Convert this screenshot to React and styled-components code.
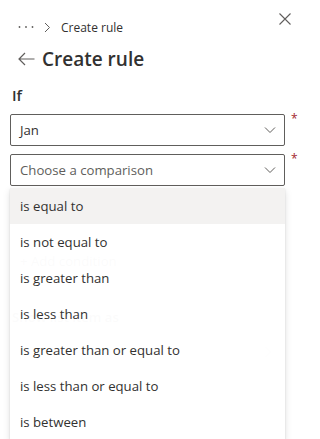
import React from "react";
import styled, { createGlobalStyle } from "styled-components";

const Global = createGlobalStyle`
  html, body { margin: 0; padding: 0; background: #fff; }
  body { font-family: "Open Sans", "Noto Sans", "Liberation Sans", sans-serif; color: #323130; }
  * { box-sizing: border-box; }
`;

const Panel = styled.div`
  position: relative;
  width: 305px;
  height: 439px;
  overflow: hidden;
  padding: 0 0 0 10px;
`;

const TopBar = styled.div`
  display: flex;
  align-items: center;
  height: 28px;
  margin-top: 13px;
  padding: 0 14px 0 8px;
`;

const Crumbs = styled.div`
  display: flex;
  align-items: center;
  gap: 10px;
  flex: 1;
  font-size: 12px;
  color: #323130;
`;

const CloseBtn = styled.button`
  border: 0;
  background: none;
  padding: 0;
  width: 12px;
  height: 12px;
  display: flex;
  align-self: flex-start;
`;

const TitleRow = styled.div`
  display: flex;
  align-items: center;
  gap: 7px;
  padding-left: 8px;
  margin-top: 3px;
  height: 30px;
`;

const Title = styled.h1`
  margin: 0;
  font-size: 19px;
  font-weight: 600;
  color: #323130;
`;

const Label = styled.div`
  font-size: 15px;
  font-weight: 600;
  margin: 10px 0 0 2px;
  height: 22px;
  line-height: 22px;
  color: #323130;
`;

const FieldRow = styled.div`
  display: flex;
  align-items: flex-start;
  margin-top: ${(p) => p.$top}px;
`;

const Select = styled.div`
  flex: 0 0 275px;
  height: 32px;
  border: 1px solid #605e5c;
  border-radius: 2px;
  display: flex;
  align-items: center;
  padding: 0 8px 0 9px;
  font-size: 13.2px;
  color: ${(p) => (p.$placeholder ? "#605e5c" : "#323130")};
  background: #fff;
`;

const SelectText = styled.span`
  flex: 1;
`;

const Req = styled.span`
  color: #a4262c;
  font-size: 12px;
  line-height: 10px;
  margin: 0 0 0 6px;
`;

const Faint = styled.div`
  margin-top: ${(p) => p.$top}px;
  font-size: 13.2px;
  font-weight: ${(p) => p.$weight || 400};
  padding-left: ${(p) => p.$left || 2}px;
  color: #323130;
`;

const FaintBox = styled.div`
  margin-top: 6px;
  display: flex;
  align-items: center;
  gap: 28px;
`;

const FaintPreview = styled.div`
  width: 226px;
  height: 40px;
  background: #f3f2f1;
`;

const Menu = styled.ul`
  position: absolute;
  left: 10px;
  top: 188px;
  width: 275px;
  margin: 0;
  padding: 0;
  list-style: none;
  background: rgba(255, 255, 255, 0.98);
  box-shadow: 0 3.2px 7.2px rgba(0, 0, 0, 0.13), 0 0.6px 1.8px rgba(0, 0, 0, 0.11);
`;

const Item = styled.li`
  height: 36px;
  display: flex;
  align-items: center;
  padding-left: 10px;
  font-size: 13.2px;
  color: #323130;
  background: ${(p) => (p.$active ? "#f3f2f1" : "transparent")};
`;

const Chevron = ({ color = "#605e5c" }) => (
  <svg width="12" height="8" viewBox="0 0 12 8" fill="none">
    <path d="M1 1.5 L6 6.5 L11 1.5" stroke={color} strokeWidth="1" />
  </svg>
);

const options = [
  "is equal to",
  "is not equal to",
  "is greater than",
  "is less than",
  "is greater than or equal to",
  "is less than or equal to",
  "is between",
];

export default function App() {
  return (
    <>
      <Global />
      <Panel>
        <TopBar>
          <Crumbs>
            <svg width="16" height="4" viewBox="0 0 16 4">
              <circle cx="1.5" cy="2" r="0.9" fill="#605e5c" />
              <circle cx="8" cy="2" r="0.9" fill="#605e5c" />
              <circle cx="14.5" cy="2" r="0.9" fill="#605e5c" />
            </svg>
            <svg width="7" height="11" viewBox="0 0 7 11" fill="none">
              <path d="M1 1 L5.5 5.5 L1 10" stroke="#605e5c" strokeWidth="1" />
            </svg>
            <span>Create rule</span>
          </Crumbs>
          <CloseBtn aria-label="Close">
            <svg width="12" height="12" viewBox="0 0 12 12" fill="none">
              <path d="M0.5 0.5 L11.5 11.5 M11.5 0.5 L0.5 11.5" stroke="#605e5c" strokeWidth="1.1" />
            </svg>
          </CloseBtn>
        </TopBar>
        <TitleRow>
          <svg width="17" height="14" viewBox="0 0 17 14" fill="none">
            <path d="M7 1 L1 7 L7 13 M1 7 H16.5" stroke="#605e5c" strokeWidth="1.2" />
          </svg>
          <Title>Create rule</Title>
        </TitleRow>
        <Label>If</Label>
        <FieldRow $top={8}>
          <Select>
            <SelectText>Jan</SelectText>
            <Chevron />
          </Select>
          <Req>*</Req>
        </FieldRow>
        <FieldRow $top={8}>
          <Select $placeholder>
            <SelectText>Choose a comparison</SelectText>
            <Chevron />
          </Select>
          <Req>*</Req>
        </FieldRow>
        <Faint $top={66} $left={10}>+ Add condition</Faint>
        <Faint $top={38} $weight={600}>Show list item as</Faint>
        <FaintBox>
          <FaintPreview />
          <svg width="8" height="12" viewBox="0 0 8 12" fill="none">
            <path d="M1.5 1 L6.5 6 L1.5 11" stroke="#605e5c" strokeWidth="1" />
          </svg>
        </FaintBox>
        <Menu role="listbox">
          {options.map((o, i) => (
            <Item key={o} $active={i === 0}>
              {o}
            </Item>
          ))}
        </Menu>
      </Panel>
    </>
  );
}
